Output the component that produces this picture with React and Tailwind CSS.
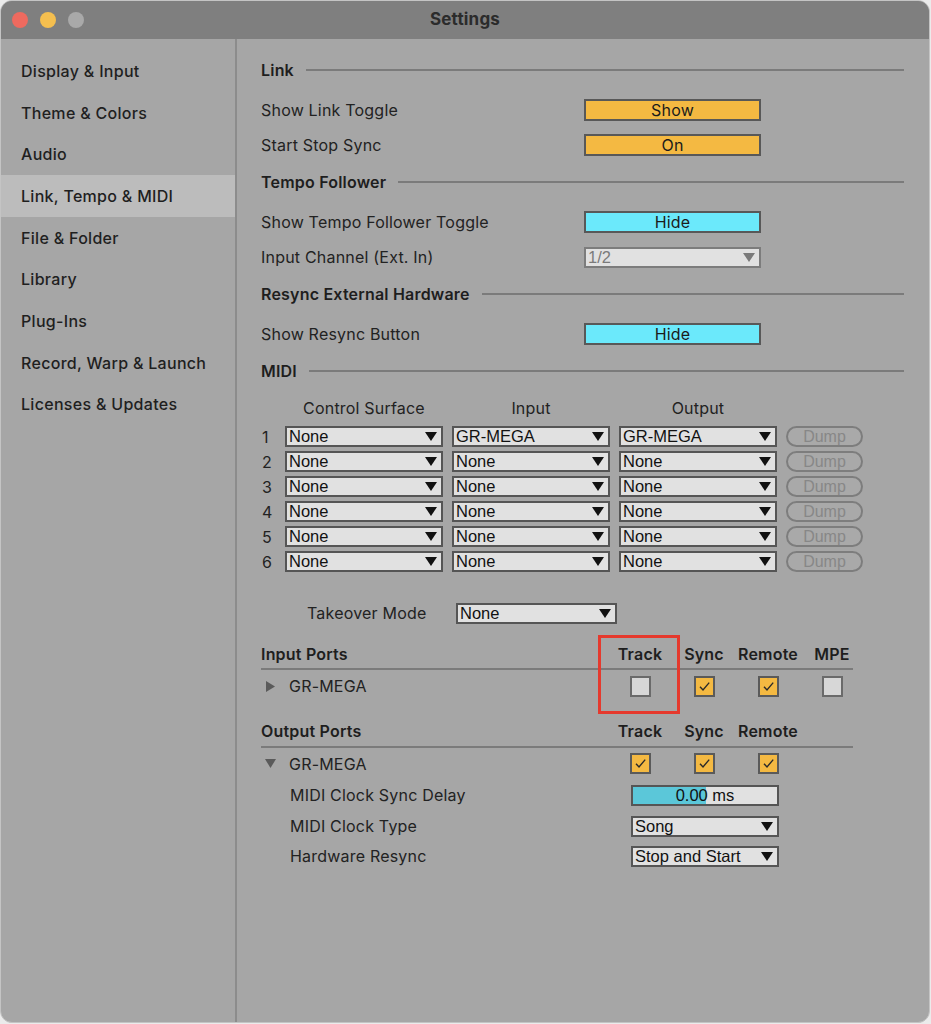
import React from 'react';

const SANS = "font-['Inter',sans-serif]";
const ARIAL = "font-['Liberation_Sans',Arial,sans-serif]";

const NAV = [
  'Display & Input',
  'Theme & Colors',
  'Audio',
  'Link, Tempo & MIDI',
  'File & Folder',
  'Library',
  'Plug-Ins',
  'Record, Warp & Launch',
  'Licenses & Updates',
];

const MIDI_ROWS = [
  ['None', 'GR-MEGA', 'GR-MEGA'],
  ['None', 'None', 'None'],
  ['None', 'None', 'None'],
  ['None', 'None', 'None'],
  ['None', 'None', 'None'],
  ['None', 'None', 'None'],
];

const Arrow = ({ dim }) => (
  <svg width="12" height="9" viewBox="0 0 12 9" className="shrink-0">
    <polygon points="0,0 12,0 6,9" fill={dim ? '#7a7a7a' : '#111'} />
  </svg>
);

const Dropdown = ({ value, className = '', dim }) => (
  <div
    className={`h-[21px] border-2 bg-[#e1e1e1] flex items-center justify-between pl-[2px] pr-[4px] text-[16.5px] leading-none ${ARIAL} ${
      dim ? 'border-[#7c7c7c] text-[#7a7a7a]' : 'border-[#555] text-[#111]'
    } ${className}`}
  >
    <span className="whitespace-nowrap">{value}</span>
    <Arrow dim={dim} />
  </div>
);

const Toggle = ({ label, tone }) => (
  <div
    className={`h-[22px] w-[177px] border-2 border-[#585858] flex items-center justify-center text-[16px] text-[#1b1b1b] tracking-[0.2px] ${SANS} ${
      tone === 'orange' ? 'bg-[#f4b942]' : 'bg-[#6be9fb]'
    }`}
  >
    {label}
  </div>
);

const Check = ({ on }) => (
  <div
    className={`w-[21px] h-[21px] border-2 flex items-center justify-center ${
      on ? 'bg-[#f4b942] border-[#5a5a5a]' : 'bg-[#d7d7d7] border-[#6a6a6a]'
    }`}
  >
    {on && (
      <svg width="13" height="11" viewBox="0 0 13 11">
        <path d="M2 5.8 L5 9 L11.2 1.6" fill="none" stroke="#2a2a2a" strokeWidth="1.4" />
      </svg>
    )}
  </div>
);

const Section = ({ title, className = '' }) => (
  <div className={`flex items-center gap-[12px] ${className}`}>
    <span className="text-[16px] font-semibold text-[#1e1e1e] tracking-[0.2px]">{title}</span>
    <div className="flex-1 h-[2px] bg-[#7b7b7b]" />
  </div>
);

const Row = ({ label, children, className = '' }) => (
  <div className={`flex items-center ${className}`}>
    <span className="w-[323px] text-[16px] text-[#222] tracking-[0.2px]">{label}</span>
    {children}
  </div>
);

const Col = ({ children }) => (
  <div className="w-[64px] flex justify-center text-[16px] font-semibold text-[#1e1e1e] tracking-[0.2px]">
    {children}
  </div>
);

export default function App() {
  return (
    <div className={`w-[931px] h-[1024px] bg-[#ebebeb] relative ${SANS}`}>
      <div className="w-[930px] h-[1023px] rounded-[12px] border border-[#c4c4c4] overflow-hidden flex flex-col bg-[#a6a6a6]">
        {/* title bar */}
        <div className="h-[38px] shrink-0 bg-[#7f7f7f] flex items-center relative">
          <div className="flex items-center gap-[12px] pl-[11px]">
            <div className="w-[16px] h-[16px] rounded-full bg-[#ee6a5f]" />
            <div className="w-[16px] h-[16px] rounded-full bg-[#f5bf4f]" />
            <div className="w-[16px] h-[16px] rounded-full bg-[#a9a9a9]" />
          </div>
          <div className="absolute inset-0 flex items-center justify-center text-[17px] font-bold text-[#2b2b2b] tracking-[0.2px]">
            Settings
          </div>
        </div>

        <div className="flex flex-1">
          {/* sidebar */}
          <div className="w-[236px] shrink-0 pt-[11px] border-r-2 border-[#8c8c8c]">
            {NAV.map((n) => (
              <div
                key={n}
                className={`h-[41.7px] flex items-center px-[20px] text-[16px] font-medium text-[#1f1f1f] tracking-[0.3px] ${
                  n === 'Link, Tempo & MIDI' ? 'bg-[#bcbcbc]' : ''
                }`}
              >
                {n}
              </div>
            ))}
          </div>

          {/* content */}
          <div className="flex-1 pl-[24px] pr-[25px] pt-[11px] flex flex-col">
            <Section title="Link" className="h-[40px]" />
            <Row label="Show Link Toggle" className="h-[40px]">
              <Toggle label="Show" tone="orange" />
            </Row>
            <Row label="Start Stop Sync" className="h-[30px]">
              <Toggle label="On" tone="orange" />
            </Row>
            <Section title="Tempo Follower" className="h-[44px]" />
            <Row label="Show Tempo Follower Toggle" className="h-[36px]">
              <Toggle label="Hide" tone="cyan" />
            </Row>
            <Row label="Input Channel (Ext. In)" className="h-[34px]">
              <Dropdown value="1/2" dim className="w-[177px]" />
            </Row>
            <Section title="Resync External Hardware" className="h-[40px]" />
            <Row label="Show Resync Button" className="h-[40px]">
              <Toggle label="Hide" tone="cyan" />
            </Row>
            <Section title="MIDI" className="h-[34px]" />

            {/* midi table */}
            <div className="h-[36px] pt-[3px] flex items-center pl-[24px] gap-[9px] text-[16px] text-[#222] tracking-[0.2px]">
              <div className="w-[158px] text-center">Control Surface</div>
              <div className="w-[158px] text-center">Input</div>
              <div className="w-[158px] text-center">Output</div>
            </div>
            {MIDI_ROWS.map((r, i) => (
              <div key={i} className="h-[25px] flex items-center">
                <div className="w-[24px] pl-[1px] text-[16px] text-[#222]">{i + 1}</div>
                <div className="flex items-center gap-[9px]">
                  <Dropdown value={r[0]} className="w-[158px]" />
                  <Dropdown value={r[1]} className="w-[158px]" />
                  <Dropdown value={r[2]} className="w-[158px]" />
                  <div
                    className={`w-[77px] h-[21px] rounded-full border-2 border-[#7d7d7d] bg-[#a9a9a9] flex items-center justify-center text-[16px] text-[#878787] ${ARIAL}`}
                  >
                    Dump
                  </div>
                </div>
              </div>
            ))}

            <div className="h-[30px] mt-[24px] flex items-center pl-[46px]">
              <span className="w-[149px] text-[16px] text-[#222] tracking-[0.2px]">Takeover Mode</span>
              <Dropdown value="None" className="w-[161px]" />
            </div>

            {/* input ports */}
            <div className="h-[40px] flex items-end pb-[2px] w-[603px]">
              <span className="flex-1 text-[16px] font-semibold text-[#1e1e1e] tracking-[0.2px]">Input Ports</span>
              <Col>Track</Col>
              <Col>Sync</Col>
              <Col>Remote</Col>
              <Col>MPE</Col>
            </div>
            <div className="w-[592px] h-[2px] bg-[#7b7b7b]" />
            <div className="h-[32px] flex items-center w-[603px]">
              <div className="flex-1 flex items-center">
                <svg width="9" height="11" viewBox="0 0 9 11" className="ml-[5px] mr-[14px]">
                  <polygon points="0,0 9,5.5 0,11" fill="#5a5a5a" />
                </svg>
                <span className="text-[16px] text-[#222] tracking-[0.2px]">GR-MEGA</span>
              </div>
              <Col><Check /></Col>
              <Col><Check on /></Col>
              <Col><Check on /></Col>
              <Col><Check /></Col>
            </div>

            {/* output ports */}
            <div className="h-[44px] flex items-end pb-[3px] w-[603px]">
              <span className="flex-1 text-[16px] font-semibold text-[#1e1e1e] tracking-[0.2px]">Output Ports</span>
              <Col>Track</Col>
              <Col>Sync</Col>
              <Col>Remote</Col>
              <Col />
            </div>
            <div className="w-[592px] h-[2px] bg-[#7b7b7b]" />
            <div className="h-[31px] flex items-center w-[603px]">
              <div className="flex-1 flex items-center">
                <svg width="11" height="9" viewBox="0 0 11 9" className="ml-[4px] mr-[13px]">
                  <polygon points="0,0 11,0 5.5,9" fill="#5a5a5a" />
                </svg>
                <span className="text-[16px] text-[#222] tracking-[0.2px]">GR-MEGA</span>
              </div>
              <Col><Check on /></Col>
              <Col><Check on /></Col>
              <Col><Check on /></Col>
              <Col />
            </div>
            <div className="h-[32px] flex items-center">
              <span className="w-[370px] pl-[29px] text-[16px] text-[#222] tracking-[0.2px]">MIDI Clock Sync Delay</span>
              <div className="w-[148px] h-[21px] border-2 border-[#555] bg-[#e1e1e1] relative flex items-center justify-center">
                <div className="absolute left-0 top-0 bottom-0 w-[73px] bg-[#5bc7d9]" />
                <span className={`relative text-[16.5px] text-[#111] ${ARIAL}`}>0.00 ms</span>
              </div>
            </div>
            <div className="h-[30px] flex items-center">
              <span className="w-[370px] pl-[29px] text-[16px] text-[#222] tracking-[0.2px]">MIDI Clock Type</span>
              <Dropdown value="Song" className="w-[148px]" />
            </div>
            <div className="h-[30px] flex items-center">
              <span className="w-[370px] pl-[29px] text-[16px] text-[#222] tracking-[0.2px]">Hardware Resync</span>
              <Dropdown value="Stop and Start" className="w-[148px]" />
            </div>
          </div>
        </div>
      </div>

      {/* annotation */}
      <div className="absolute left-[598px] top-[635px] w-[82px] h-[79px] border-[3px] border-[#e5392d]" />
    </div>
  );
}
